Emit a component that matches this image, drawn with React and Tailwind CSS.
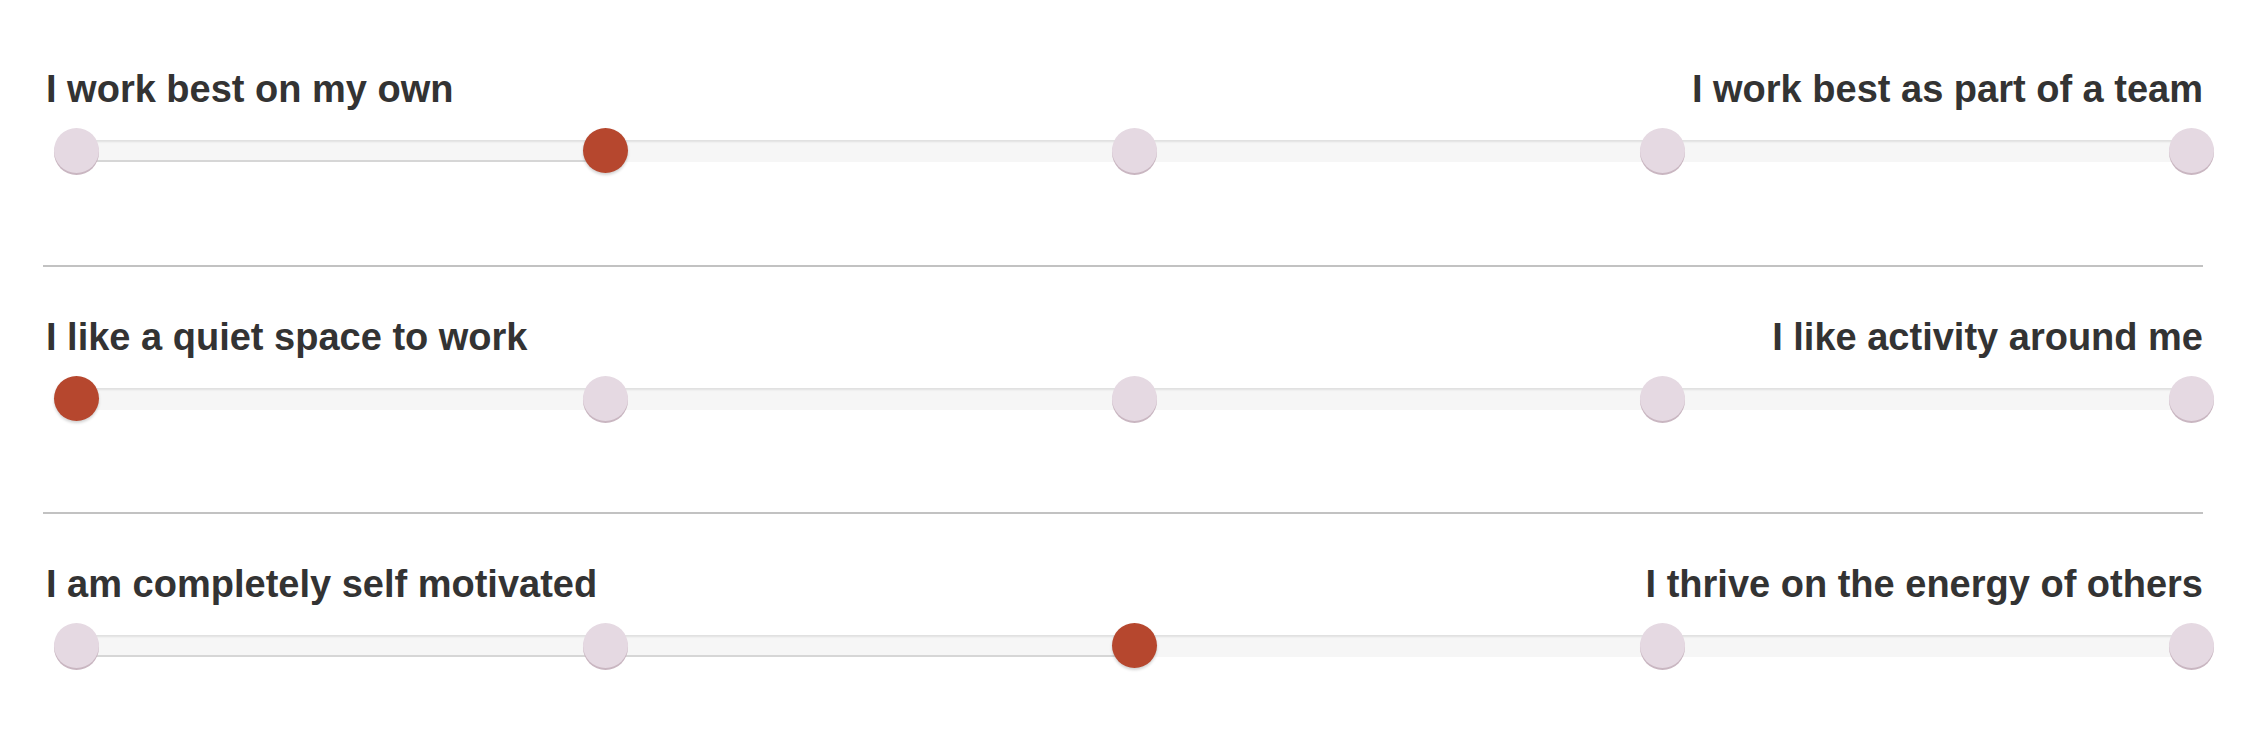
const questions = [
  { left: 'I work best on my own', right: 'I work best as part of a team', value: 1 },
  { left: 'I like a quiet space to work', right: 'I like activity around me', value: 0 },
  { left: 'I am completely self motivated', right: 'I thrive on the energy of others', value: 2 },
]

const steps = [0, 1, 2, 3, 4]

function Scale({ value }) {
  return (
    <div className="relative ml-[11px] h-[45px] w-[2160px]">
      <div className="absolute left-[22.5px] right-[22.5px] top-[12px] h-[22px] bg-[#f6f6f6] shadow-[inset_0_2px_2px_rgba(0,0,0,0.09)]">
        <div
          className="absolute bottom-0 left-0 top-0 border-b-2 border-[#d6d6d6]"
          style={{ width: `${value * 25}%` }}
        />
      </div>
      <div className="relative flex h-full items-center justify-between">
        {steps.map((step) => (
          <div
            key={step}
            className={
              step === value
                ? 'h-[45px] w-[45px] rounded-full bg-[#b6472e] shadow-[0_2px_3px_rgba(0,0,0,0.18)]'
                : 'h-[45px] w-[45px] rounded-full bg-[#e5d9e2] shadow-[0_2px_0_#c9b6c1]'
            }
          />
        ))}
      </div>
    </div>
  )
}

export default function App() {
  return (
    <div className="min-h-screen bg-white pt-[19px] font-['Liberation_Sans',Arial,sans-serif] text-[#333333]">
      <div className="ml-[43px] w-[2160px]">
        {questions.map((q, i) => (
          <section
            key={q.left}
            className={i < questions.length - 1 ? 'border-b-2 border-[#c2c2c2] pb-[91.5px] pt-[49px]' : 'pt-[49px]'}
          >
            <div className="flex justify-between text-[38px] font-bold leading-[43px]">
              <span className="pl-[3px]">{q.left}</span>
              <span>{q.right}</span>
            </div>
            <div className="mt-[17px]">
              <Scale value={q.value} />
            </div>
          </section>
        ))}
      </div>
    </div>
  )
}
